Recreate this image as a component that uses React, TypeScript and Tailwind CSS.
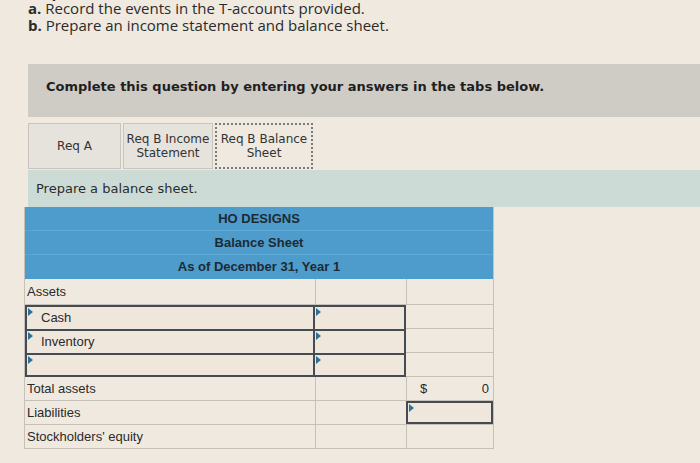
import React from 'react';

const sans = "font-['Open_Sans',sans-serif]";
const verdana = "font-['DejaVu_Sans',Verdana,sans-serif]";
const arial = "font-['Liberation_Sans',Arial,sans-serif]";

function Marker() {
  return (
    <span className="absolute left-[1px] top-[1px] w-0 h-0 border-t-[4px] border-b-[4px] border-l-[5px] border-t-transparent border-b-transparent border-l-[#2f6f9a]" />
  );
}

function InputRow({ label, last }: { label: string; last?: boolean }) {
  const edge = last ? 'border-b-2' : '';
  return (
    <div className="flex h-[24px]">
      <div className={`relative w-[290px] border-t-2 border-x-2 ${edge} border-[#454b52] bg-[#efe7db] pl-[14px] flex items-center`}>
        <Marker />
        <span>{label}</span>
      </div>
      <div className={`relative w-[91px] border-t-2 border-r-2 ${edge} border-[#454b52] bg-[#efe7db]`}>
        <Marker />
      </div>
      <div className="flex-1 border-b border-[#c7c0b6]" />
    </div>
  );
}

function PlainRow({ label, tall, c3 }: { label: string; tall?: boolean; c3?: React.ReactNode }) {
  return (
    <div className={`flex ${tall ? 'h-[26px]' : 'h-[24px]'} border-b border-[#c7c0b6]`}>
      <div className="w-[290px] flex items-center pl-[2px]">{label}</div>
      <div className="w-[91px] border-l border-[#c7c0b6]" />
      <div className="flex-1 border-l border-[#c7c0b6] relative">{c3}</div>
    </div>
  );
}

export default function App() {
  return (
    <div className="w-[700px] h-[463px] overflow-hidden bg-[#efe9e0] text-[#2b2b2b]">
      {/* required list, heading cut off by the top edge */}
      <div className={`${sans} text-[15px] leading-[17px] pl-[28px] -mt-[14px]`}>
        <div className="font-bold h-[14px] leading-[12px]">Required</div>
        <div><span className="font-bold">a.</span> Record the events in the T-accounts provided.</div>
        <div><span className="font-bold">b.</span> Prepare an income statement and balance sheet.</div>
      </div>

      {/* banner */}
      <div className={`${verdana} ml-[28px] mt-[30px] h-[53px] bg-[#cfcbc5] pl-[18px] pt-[13px] text-[13px] font-bold text-[#1f1f1f]`}>
        Complete this question by entering your answers in the tabs below.
      </div>

      {/* tabs */}
      <div className={`${verdana} ml-[28px] mt-[6px] flex gap-[2px] h-[46px] text-[12px] leading-[14px] text-[#333]`}>
        <div className="w-[93px] bg-[#e6e2dc] border border-[#c9c4bd] flex items-center justify-center">Req A</div>
        <div className="w-[90px] bg-[#e6e2dc] border border-[#c9c4bd] flex items-center justify-center text-center">
          Req B Income<br />Statement
        </div>
        <div className="w-[98px] border-2 border-dotted border-[#7a7a7a] flex items-center justify-center text-center">
          Req B Balance<br />Sheet
        </div>
      </div>

      {/* instruction band */}
      <div className={`${verdana} ml-[28px] mt-[1px] h-[37px] bg-[#cddbd7] pl-[8px] flex items-center text-[13px] text-[#2b2b2b]`}>
        Prepare a balance sheet.
      </div>

      {/* balance sheet */}
      <div className={`${arial} ml-[24px] w-[470px] text-[13px] text-[#2a2a2a] border-l border-r border-[#c7c0b6]`}>
        <div className="bg-[#4d9ccb] font-bold text-[#1e2a33]">
          <div className="h-[24px] flex items-center justify-center border-b border-[#5fa9d5]">HO DESIGNS</div>
          <div className="h-[24px] flex items-center justify-center border-b border-[#5fa9d5]">Balance Sheet</div>
          <div className="h-[24px] flex items-center justify-center">As of December 31, Year 1</div>
        </div>
        <PlainRow label="Assets" tall />
        <InputRow label="Cash" />
        <InputRow label="Inventory" />
        <InputRow label="" last />
        <PlainRow
          label="Total assets"
          c3={
            <div className="flex h-full items-center justify-between pl-[13px] pr-[4px]">
              <span>$</span>
              <span>0</span>
            </div>
          }
        />
        <div className="flex h-[24px] border-b border-[#c7c0b6]">
          <div className="w-[290px] flex items-center pl-[2px]">Liabilities</div>
          <div className="w-[91px] border-l border-[#c7c0b6]" />
          <div className="relative flex-1 border-2 border-[#454b52] bg-[#efe7db]">
            <Marker />
          </div>
        </div>
        <PlainRow label="Stockholders' equity" />
      </div>
    </div>
  );
}
